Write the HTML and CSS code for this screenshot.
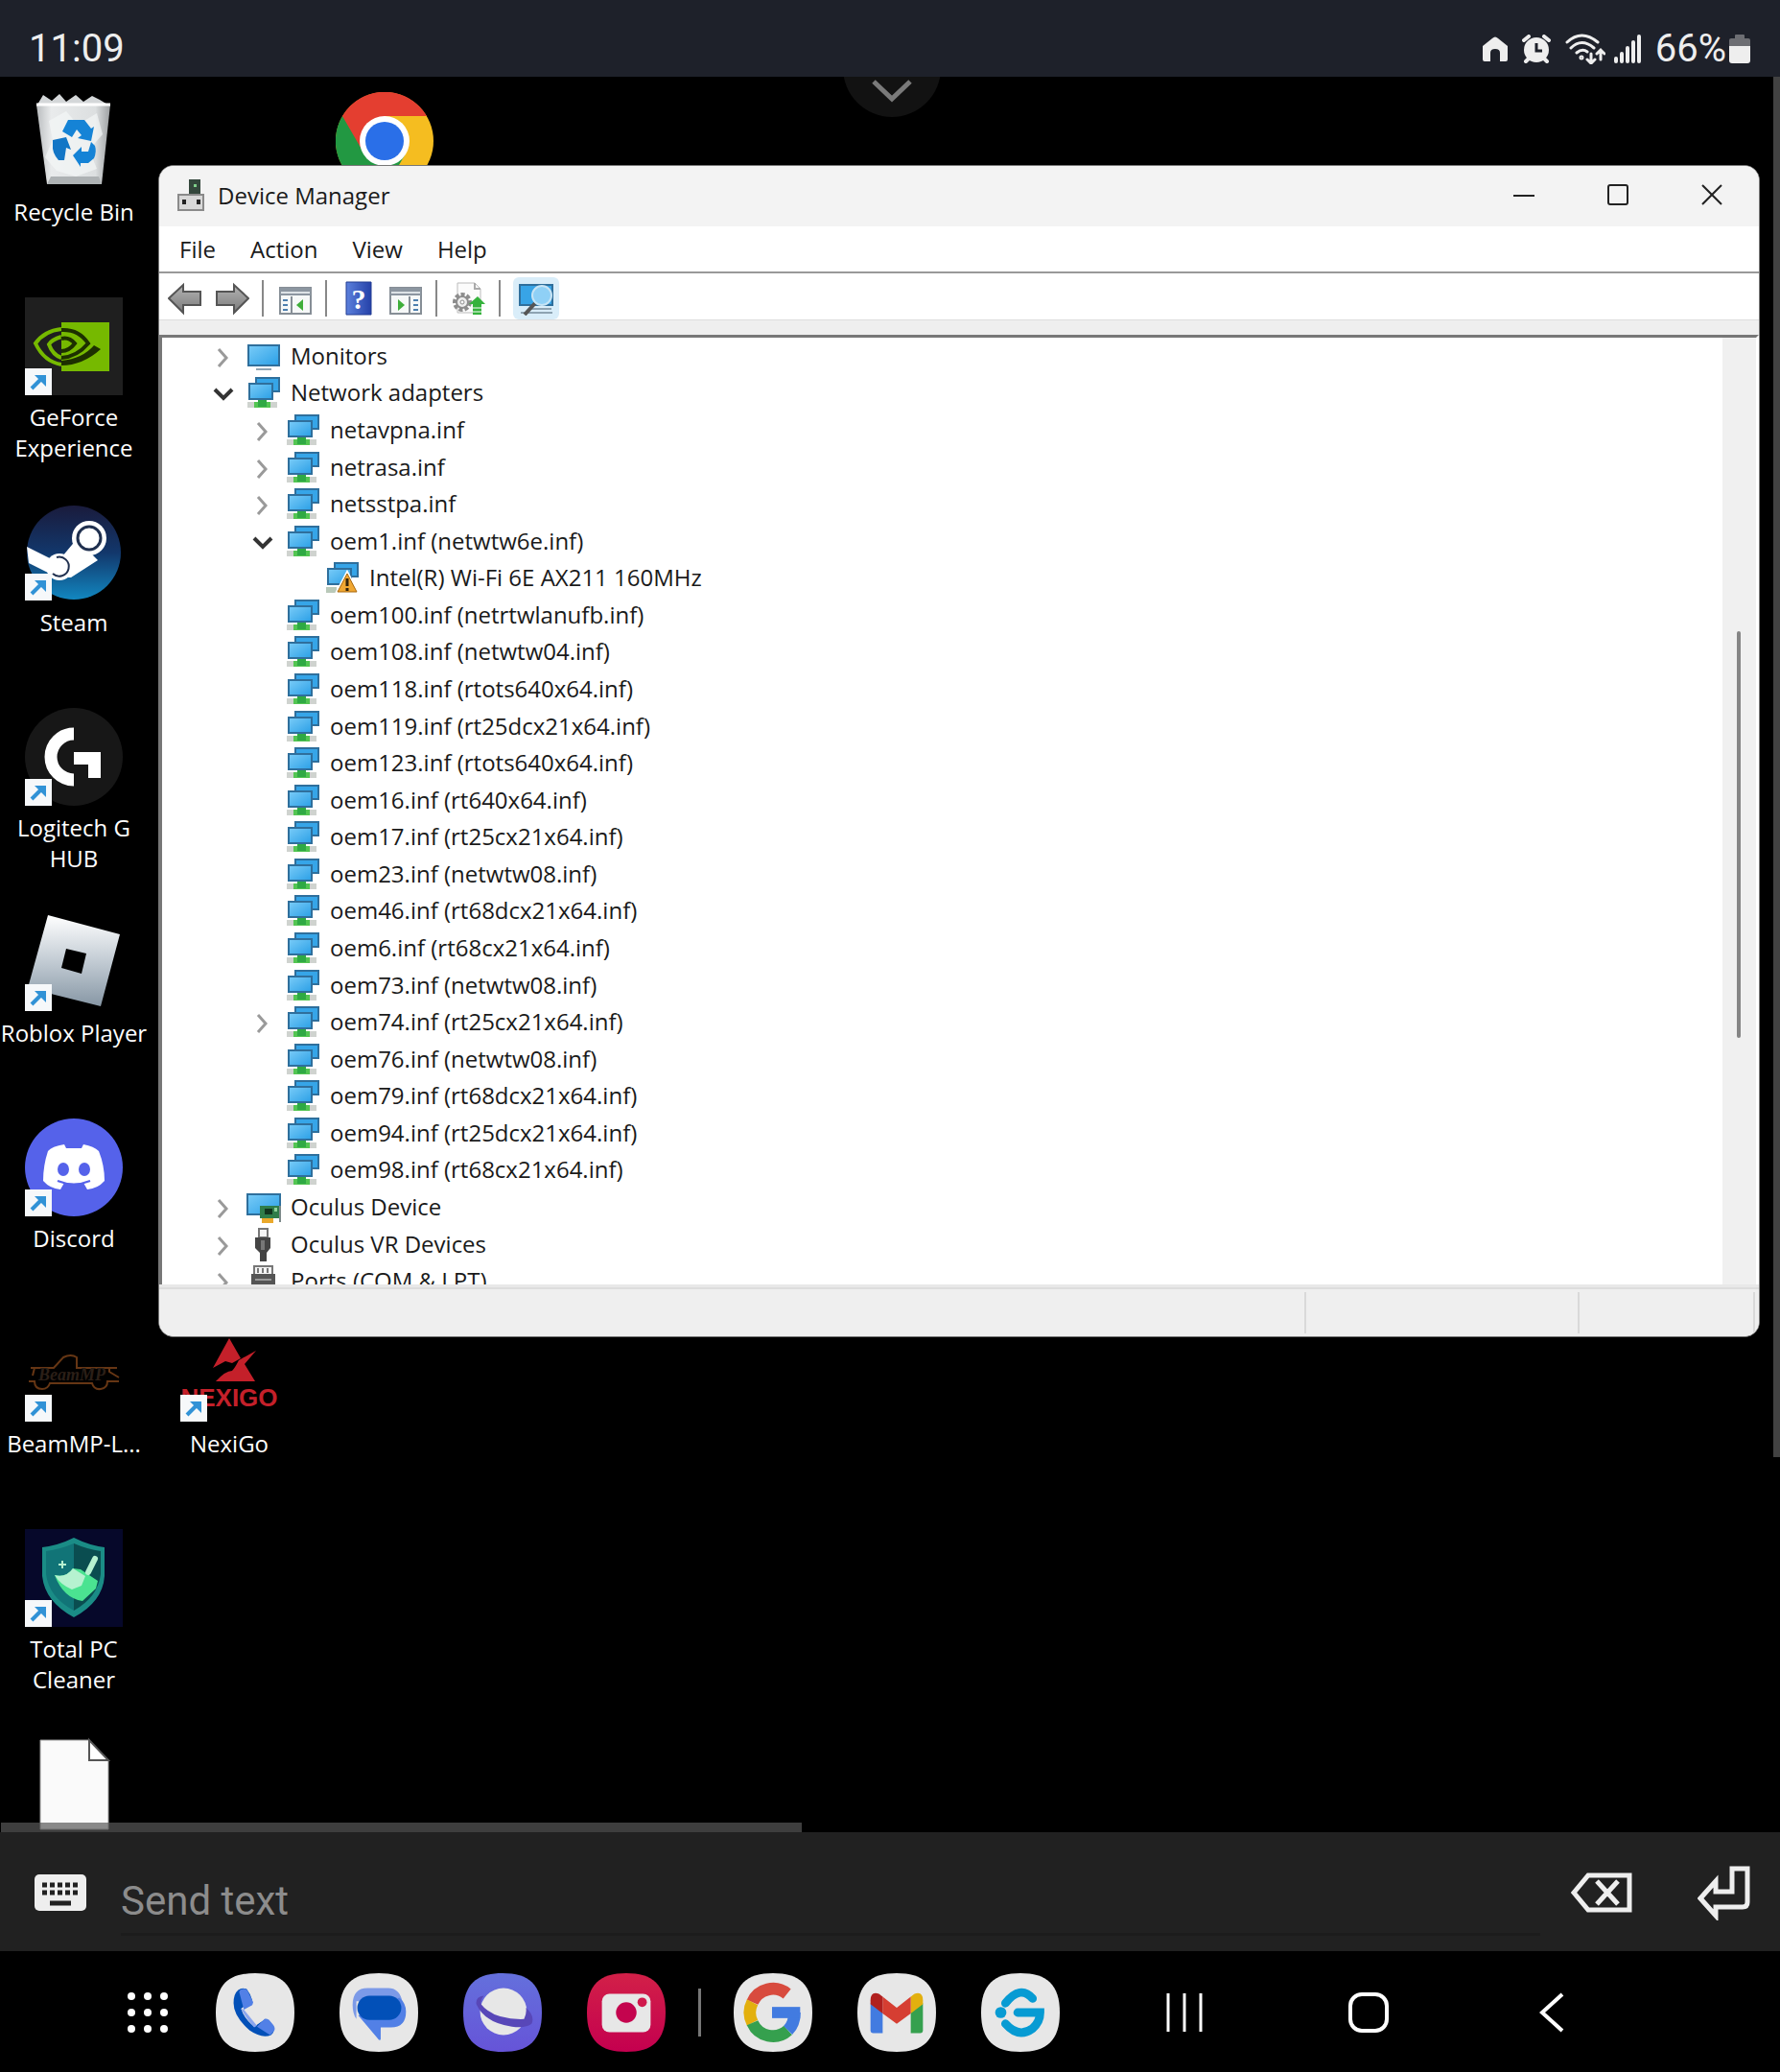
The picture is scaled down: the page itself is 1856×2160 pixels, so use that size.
FILE: index.html
```html
<!doctype html>
<html lang="en">
<head>
<title>Remote Desktop</title>
<meta charset="utf-8">
<meta name="viewport" content="width=device-width, initial-scale=1">
<link rel="stylesheet" href="styles.css">
</head>
<body>

<!-- shared icons -->
<svg class="defs" aria-hidden="true">
	<defs>
		<linearGradient id="screen" x1="0" y1="0" x2="1" y2="1">
			<stop offset="0" stop-color="#7accf8"/><stop offset="1" stop-color="#2a9fe6"/>
		</linearGradient>
		<linearGradient id="steamBg" x1="0" y1="0" x2="0" y2="1">
			<stop offset="0" stop-color="#1a1b3c"/><stop offset=".5" stop-color="#12376b"/><stop offset="1" stop-color="#1287c0"/>
		</linearGradient>
		<linearGradient id="silver" x1="0" y1="0" x2="0" y2="1">
			<stop offset="0" stop-color="#fff"/><stop offset=".5" stop-color="#c3ccd4"/><stop offset="1" stop-color="#8797a5"/>
		</linearGradient>
		<linearGradient id="helpBg" x1="0" y1="0" x2="1" y2="0">
			<stop offset="0" stop-color="#5b80dc"/><stop offset="1" stop-color="#2541a8"/>
		</linearGradient>
		<linearGradient id="arrowBg" x1="0" y1="0" x2="0" y2="1">
			<stop offset="0" stop-color="#b4b4b4"/><stop offset="1" stop-color="#7a7a7a"/>
		</linearGradient>
		<linearGradient id="planetBg" x1="0" y1="0" x2="0" y2="1">
			<stop offset="0" stop-color="#6470dc"/><stop offset="1" stop-color="#6654d8"/>
		</linearGradient>
		<linearGradient id="cameraBg" x1="0" y1="0" x2="0" y2="1">
			<stop offset="0" stop-color="#d22048"/><stop offset="1" stop-color="#c4004f"/>
		</linearGradient>
		<linearGradient id="binBg" x1="0" y1="0" x2="1" y2="0">
			<stop offset="0" stop-color="#b9bcbe"/><stop offset=".2" stop-color="#e9ebec"/><stop offset=".8" stop-color="#dcdfe0"/><stop offset="1" stop-color="#9c9fa1"/>
		</linearGradient>
	</defs>
	<symbol id="closed" viewBox="0 0 40 36"><path d="M15 10l8 9-8 9" fill="none" stroke="#9a9a9a" stroke-width="3"/></symbol>
	<symbol id="open" viewBox="0 0 40 36"><path d="M11 14l9 9 9-9" fill="none" stroke="#333" stroke-width="4"/></symbol>
	<symbol id="monitor" viewBox="0 0 36 36">
		<path d="M2 6h32v21H2z" fill="url(#screen)" stroke="#2f6f9c" stroke-width="2"/>
		<path d="M10 31h16" stroke="#8fa4b3" stroke-width="2"/>
	</symbol>
	<symbol id="screens" viewBox="0 0 36 36">
		<path d="M10 2h24v14H10z" fill="#36a5e8" stroke="#2f6f9c" stroke-width="2"/>
		<path d="M3 8h24v16H3z" fill="url(#screen)" stroke="#2f6f9c" stroke-width="2"/>
	</symbol>
	<symbol id="net" viewBox="0 0 36 36">
		<path d="M1 30h31" stroke="#cfd3cf" stroke-width="6"/>
		<path d="M8 30h17" stroke="#53c552" stroke-width="6"/>
		<path d="M12 24h9v8h-9z" fill="#2fa944"/>
		<use href="#screens"/>
	</symbol>
	<symbol id="netWarn" viewBox="0 0 36 36">
		<path d="M1 30h11" stroke="#b9c9b9" stroke-width="6"/>
		<use href="#screens"/>
		<path d="M23 12l11 21H12z" fill="#f0a732" stroke="#fff" stroke-width="3"/>
		<path d="M23 13l10 19H13z" fill="#f0a732" stroke="#a8670c" stroke-width="1"/>
		<path d="M23 18v8M23 28v3" stroke="#33230a" stroke-width="3"/>
	</symbol>
	<symbol id="card" viewBox="0 0 36 36">
		<path d="M1 4h34v21H1z" fill="url(#screen)" stroke="#2f6f9c" stroke-width="2"/>
		<path d="M14 16h20v13H14z" fill="#2f7d4a"/>
		<path d="M19 19h8v6h-8z" fill="#12351f"/>
		<path d="M29 18h3v4h-3z" fill="#8fd29a"/>
		<path d="M35 16v17" stroke="#7d8a8a" stroke-width="2"/>
		<path d="M16 29h12v5H16z" fill="#eaa92b"/>
	</symbol>
	<symbol id="usb" viewBox="0 0 36 36">
		<path d="M13 1h9v9h-9z" fill="#f4f4f4" stroke="#777" stroke-width="2"/>
		<path d="M9 10h16v11l-4 5v9h-7v-9l-5-5z" fill="#444"/>
		<path d="M15 13h4v10h-4z" fill="#777"/>
	</symbol>
	<symbol id="port" viewBox="0 0 36 36">
		<path d="M8 2h19v9H8z" fill="#f4f4f4" stroke="#777" stroke-width="2"/>
		<path d="M12 4v5M17 4v5M22 4v5" stroke="#777" stroke-width="2"/>
		<path d="M5 10h25v26H5z" fill="#555"/>
		<path d="M9 16h17M9 22h17" stroke="#999" stroke-width="2"/>
	</symbol>
	<symbol id="shortcut" viewBox="0 0 28 28">
		<path d="M0 0h28v28H0z" fill="#f6f8fa"/>
		<path d="M7 21L17 11" stroke="#3192d6" stroke-width="4"/>
		<path d="M10 7h12v12l-4-4-5-5z" fill="#3192d6"/>
	</symbol>
	<symbol id="tile" viewBox="0 0 84 84"><path d="M42 0C70 0 84 12 84 42S70 84 42 84 0 72 0 42 14 0 42 0z"/></symbol>
</svg>

<header class="status">
	<time>11:09</time>
	<div class="status-icons">
		<svg width="26" height="30" viewBox="0 0 26 30"><path d="M0 12L10 4q3-3 6 0l10 8v14q0 2-2 2h-6V19q0-4-5-4t-5 4v9H2q-2 0-2-2z" fill="#eee"/></svg>
		<svg width="30" height="30" viewBox="0 0 30 30"><circle cx="15" cy="16" r="13" fill="#eee"/><path d="M2 6l5-4M28 6l-5-4M4 28l4-4M26 28l-4-4" stroke="#eee" stroke-width="4" stroke-linecap="round"/><path d="M15 9v8h6" fill="none" stroke="#1e212a" stroke-width="3"/></svg>
		<svg class="wifi" width="42" height="32" viewBox="0 0 42 32" fill="none" stroke="#eee" stroke-width="3" stroke-linecap="round"><path d="M2 9Q17-5 34 9M6 15q11-11 24 0M12 20q6-5 11-1"/><circle cx="17" cy="25" r="1"/><path d="M27 21v9M23 27l4 4 4-4M37 27v-9M33 21l4-4 4 4"/></svg>
		<svg width="28" height="30" viewBox="0 0 28 30" stroke="#eee" stroke-width="4" stroke-linecap="round"><path d="M2 25v3M8 20v8M14 14v14M20 8v20M26 2v26"/></svg>
		<span class="battery-level">66%</span>
		<svg width="22" height="32" viewBox="0 0 22 32"><path d="M0 13V7q0-2 2-2h4V2q0-1 1-1h8q1 0 1 1v3h4q2 0 2 2v6z" fill="#6d6e73"/><path d="M0 13h22v15q0 3-3 3H3q-3 0-3-3z" fill="#eee"/></svg>
	</div>
</header>

<main class="desktop">

	<div class="icons">
		<a class="icon" href="#">
			<span class="art"><svg width="102" height="102" viewBox="0 0 102 102">
				<path d="M13 13l6-10 9 6 8-7 7 8 10-7 8 7 9-6 8 4 10 6z" fill="#d4d7d9"/>
				<path d="M12 13h77L80 96H23z" fill="url(#binBg)"/>
				<path d="M12 13h77" stroke="#fff" stroke-width="3"/>
				<path d="M25 30l18-10 12 14 20-12 6 22-14 16 8 20-22 8-20-6-12-14 8-18z" fill="#f4f6f7" opacity=".7"/>
				<path d="M23 96l4-8h50l3 8z" fill="#aeb2b4"/>
				<path d="M39 41l6-12h17l7 9 3-2-3 15-14-3 4-3-5-6-5 8z" fill="#1583d6"/>
				<path d="M29 50l14-3 5 13-5-2-2 13H35q-7-8-6-16z" fill="#1376c6"/>
				<path d="M50 66l9-9v5h7l3-10 4 4q2 6-1 13l-6 5h-8v4z" fill="#1583d6"/>
			</svg></span>
			<span class="name">Recycle Bin</span>
		</a>
		<a class="icon" href="#">
			<span class="art"><svg width="102" height="102" viewBox="0 0 102 102">
				<path d="M0 0h102v102H0z" fill="#1f1f1f"/>
				<path d="M38 26h50v51H38z" fill="#76b900"/>
				<path d="M38 33Q20 35 11 48q9 19 27 22" fill="none" stroke="#76b900" stroke-width="4"/>
				<path d="M38 41q-10 3-13 8 4 11 13 14" fill="none" stroke="#76b900" stroke-width="4"/>
				<path d="M38 34q18-1 28 14-12 14-28 15M38 43q8-2 14 5-6 8-14 8" fill="none" stroke="#1d3000" stroke-width="4"/>
				<path d="M38 71q22 0 41-17l-7-4q-12 14-34 16z" fill="#1d3000"/>
			</svg><svg class="badge"><use href="#shortcut"/></svg></span>
			<span class="name">GeForce Experience</span>
		</a>
		<a class="icon" href="#">
			<span class="art"><svg width="102" height="102" viewBox="0 0 102 102">
				<circle cx="51" cy="52" r="49" fill="url(#steamBg)"/>
				<path d="M2 46l32 16 20-24 22 22-28 18-14 0L4 63z" fill="#fff"/>
				<circle cx="67" cy="37" r="18" fill="#fff"/><circle cx="67" cy="37" r="12" fill="#fff" stroke="#20304f" stroke-width="3"/>
				<circle cx="36" cy="67" r="14" fill="#fff"/><path d="M33 57a10 10 0 1 1-4 17" fill="none" stroke="#20304f" stroke-width="2"/>
			</svg><svg class="badge"><use href="#shortcut"/></svg></span>
			<span class="name">Steam</span>
		</a>
		<a class="icon" href="#">
			<span class="art"><svg width="102" height="102" viewBox="0 0 102 102">
				<circle cx="51" cy="51" r="51" fill="#171717"/>
				<path d="M51 27a24 24 0 0 0 0 48" fill="none" stroke="#fff" stroke-width="13"/>
				<path d="M51 46h28v27H66V59H51z" fill="#fff"/>
			</svg><svg class="badge"><use href="#shortcut"/></svg></span>
			<span class="name">Logitech G HUB</span>
		</a>
		<a class="icon" href="#">
			<span class="art"><svg width="102" height="102" viewBox="0 0 102 102">
				<path fill-rule="evenodd" d="M24 2l75 20-20 75L3 78zM43 37l-5 20 21 6 5-21z" fill="url(#silver)"/>
			</svg><svg class="badge"><use href="#shortcut"/></svg></span>
			<span class="name">Roblox Player</span>
		</a>
		<a class="icon" href="#">
			<span class="art"><svg width="102" height="102" viewBox="0 0 102 102">
				<circle cx="51" cy="51" r="51" fill="#5562ea"/>
				<path fill-rule="evenodd" d="M41 27q-13 2-17 7-5 15-5 31 7 8 18 9l4-7q10 2 20 0l4 7q11-1 18-9 0-16-6-31-5-5-16-7l-2 4H43zM40 46a6 7 0 1 1 0 14 6 7 0 0 1 0-14zM62 46a6 7 0 1 1 0 14 6 7 0 0 1 0-14z" fill="#fff"/>
				<path d="M34 65q17 7 34 0" fill="none" stroke="#5562ea" stroke-width="2"/>
			</svg><svg class="badge"><use href="#shortcut"/></svg></span>
			<span class="name">Discord</span>
		</a>
		<a class="icon" href="#">
			<span class="art"><svg width="102" height="102" viewBox="0 0 102 102">
				<g fill="none" stroke="#663614" stroke-width="2"><path d="M6 46h24l10-11q8-4 14 0v11h42M4 60h6q0 8 8 8 6 0 8-6h44q2 7 9 6 7-1 7-8h12"/><path d="M10 46l-2 8M88 46v4l10 6"/></g>
				<text x="14" y="59" class="beam">BeamMP</text>
			</svg><svg class="badge"><use href="#shortcut"/></svg></span>
			<span class="name">BeamMP-L...</span>
		</a>
		<a class="icon" href="#">
			<span class="art"><svg width="102" height="102" viewBox="0 0 102 102">
				<path d="M0 0h102v102H0z" fill="#06082a"/>
				<path d="M51 9q16 8 32 10v30q-2 27-32 43Q21 76 18 49V19q17-2 33-10z" fill="#1a8c86"/>
				<path d="M51 15v70Q25 71 22 47V23q15-2 29-8z" fill="#117477"/>
				<path d="M51 15q14 6 28 8v24q-3 24-28 38z" fill="#0a4d50"/>
				<path d="M31 48q12 3 19-7l8 1 18 12-2 8-14 13q-20-3-29-27z" fill="#4be391"/>
				<path d="M31 48q12 3 19-7l13 8-4 10-10 4q-12-5-18-15z" fill="#b6f2d0"/>
				<path d="M66 45l7-14" stroke="#b6f2d0" stroke-width="6" stroke-linecap="round"/>
				<path d="M39 33v8M35 37h8" stroke="#b6f2d0" stroke-width="2"/>
			</svg><svg class="badge"><use href="#shortcut"/></svg></span>
			<span class="name">Total PC Cleaner</span>
		</a>
		<a class="icon" href="#" aria-label="File">
			<span class="art"><svg width="102" height="102" viewBox="0 0 102 102">
				<path d="M16 6h51l20 21v72H16z" fill="#fafafa" stroke="#999" stroke-width="1"/>
				<path d="M67 6v21h20z" fill="#fff" stroke="#555" stroke-width="2"/>
			</svg></span>
		</a>
		<a class="icon nexigo" href="#">
			<span class="art"><svg width="102" height="102" viewBox="0 0 102 102">
				<path d="M51 15l12 21-9 5-7-2-13 7zM37 60q10-11 17-11 3-3 7-11L79 28 67 42l11 18z" fill="#c4202a"/>
				<text x="51" y="86" class="nexi">NEXIGO</text>
			</svg><svg class="badge"><use href="#shortcut"/></svg></span>
			<span class="name">NexiGo</span>
		</a>
		<a class="icon chrome" href="#" aria-label="Chrome">
			<span class="art"><svg width="102" height="102" viewBox="0 0 102 102">
				<circle cx="51" cy="51" r="51" fill="#f5bd20"/>
				<path d="M51 51L7 25a51 51 0 0 0 44 77l22-38z" fill="#229842"/>
				<path d="M51 25h44A51 51 0 0 0 7 25l22 38z" fill="#e43e30"/>
				<circle cx="51" cy="51" r="26" fill="#fff"/><circle cx="51" cy="51" r="20" fill="#2a6fe8"/>
			</svg></span>
		</a>
	</div>

	<section class="window">
		<div class="titlebar">
			<svg width="28" height="34" viewBox="0 0 28 34"><path d="M12 1h12v16H12z" fill="#34473c"/><path d="M17 6h3v3h-3z" fill="#7fd08a"/><path d="M1 17h26v16H1z" fill="#d8d8d8" stroke="#8a8a8a" stroke-width="2"/><path d="M5 22h4v5H5zM20 22h4v5h-4z" fill="#222"/></svg>
			<h1>Device Manager</h1>
			<button aria-label="Minimize"><svg width="24" height="24"><path d="M1 13h22" stroke="#222" stroke-width="2"/></svg></button>
			<button aria-label="Maximize"><svg width="24" height="24"><rect x="2" y="2" width="20" height="20" rx="2" fill="none" stroke="#222" stroke-width="2"/></svg></button>
			<button aria-label="Close"><svg width="24" height="24"><path d="M2 2l20 20M22 2L2 22" stroke="#222" stroke-width="2"/></svg></button>
		</div>

		<nav class="menubar">
			<button>File</button>
			<button>Action</button>
			<button>View</button>
			<button>Help</button>
		</nav>

		<div class="toolbar">
			<button aria-label="Back"><svg width="36" height="36" viewBox="0 0 36 36"><path d="M1 18L16 4v7h18v14H16v8z" fill="url(#arrowBg)" stroke="#555" stroke-width="2"/></svg></button>
			<button aria-label="Forward"><svg width="36" height="36" viewBox="0 0 36 36"><path d="M35 18L20 4v7H2v14h18v8z" fill="url(#arrowBg)" stroke="#555" stroke-width="2"/></svg></button>
			<i></i>
			<button aria-label="Show or hide console tree"><svg width="36" height="36" viewBox="0 0 36 36"><path d="M2 7h32v27H2z" fill="#f6f8f8" stroke="#868e96" stroke-width="2"/><path d="M2 7h32v8H2z" fill="#8c96a0"/><path d="M3 12h30" stroke="#dde2e6" stroke-width="2"/><path d="M14 16v18" stroke="#868e96" stroke-width="2"/><path d="M5 20h5M5 25h5M5 30h5" stroke="#4d7fae" stroke-width="2"/><path d="M26 19v12l-7-6z" fill="#3fae3a"/></svg></button>
			<i></i>
			<button aria-label="Help"><svg width="36" height="36" viewBox="0 0 36 36"><path d="M5 1h26v34H5z" fill="url(#helpBg)" stroke="#223c92" stroke-width="1"/><text x="18" y="29" class="help">?</text></svg></button>
			<button aria-label="Show or hide action pane"><svg width="36" height="36" viewBox="0 0 36 36"><path d="M2 7h32v27H2z" fill="#f6f8f8" stroke="#868e96" stroke-width="2"/><path d="M2 7h32v8H2z" fill="#8c96a0"/><path d="M3 12h30" stroke="#dde2e6" stroke-width="2"/><path d="M22 16v18" stroke="#868e96" stroke-width="2"/><path d="M26 20h5M26 25h5M26 30h5" stroke="#4d7fae" stroke-width="2"/><path d="M10 19v12l7-6z" fill="#3fae3a"/></svg></button>
			<i></i>
			<button aria-label="Update driver"><svg width="36" height="36" viewBox="0 0 36 36"><path d="M6 2h18l6 6v25H6z" fill="#fbfbfb" stroke="#bbb" stroke-width="1"/><path d="M24 2v6h6" fill="none" stroke="#aaa" stroke-width="2"/><circle cx="11" cy="22" r="8" fill="none" stroke="#8d8d8d" stroke-width="4" stroke-dasharray="4 2"/><circle cx="11" cy="22" r="6" fill="#eee" stroke="#8d8d8d" stroke-width="2"/><circle cx="11" cy="22" r="2" fill="#fff" stroke="#8d8d8d"/><path d="M27 16l8 8h-4v11h-9V24h-4z" fill="#35b23c"/><path d="M22 28h9M22 32h9" stroke="#fff" stroke-width="1"/></svg></button>
			<i></i>
			<button class="active" aria-label="Scan for hardware changes"><svg width="36" height="36" viewBox="0 0 36 36"><path d="M1 4h34v21H1z" fill="#38a4e6" stroke="#2f6f9c" stroke-width="2"/><path d="M2 33h33M12 29h22" stroke="#8ea3b2" stroke-width="2"/><path d="M17 23L6 35" stroke="#555" stroke-width="4"/><circle cx="24" cy="15" r="10" fill="#8fd0f6" stroke="#c7e4f5" stroke-width="2"/></svg></button>
		</div>

		<div class="pane">
			<ul class="tree">
				<li><button aria-label="Expand"><svg><use href="#closed"/></svg></button><svg><use href="#monitor"/></svg>Monitors</li>
				<li><button aria-label="Collapse"><svg><use href="#open"/></svg></button><svg><use href="#net"/></svg>Network adapters</li>
				<li class="sub"><button aria-label="Expand"><svg><use href="#closed"/></svg></button><svg><use href="#net"/></svg>netavpna.inf</li>
				<li class="sub"><button aria-label="Expand"><svg><use href="#closed"/></svg></button><svg><use href="#net"/></svg>netrasa.inf</li>
				<li class="sub"><button aria-label="Expand"><svg><use href="#closed"/></svg></button><svg><use href="#net"/></svg>netsstpa.inf</li>
				<li class="sub"><button aria-label="Collapse"><svg><use href="#open"/></svg></button><svg><use href="#net"/></svg>oem1.inf (netwtw6e.inf)</li>
				<li class="device"><svg><use href="#netWarn"/></svg>Intel(R) Wi-Fi 6E AX211 160MHz</li>
				<li class="leaf"><svg><use href="#net"/></svg>oem100.inf (netrtwlanufb.inf)</li>
				<li class="leaf"><svg><use href="#net"/></svg>oem108.inf (netwtw04.inf)</li>
				<li class="leaf"><svg><use href="#net"/></svg>oem118.inf (rtots640x64.inf)</li>
				<li class="leaf"><svg><use href="#net"/></svg>oem119.inf (rt25dcx21x64.inf)</li>
				<li class="leaf"><svg><use href="#net"/></svg>oem123.inf (rtots640x64.inf)</li>
				<li class="leaf"><svg><use href="#net"/></svg>oem16.inf (rt640x64.inf)</li>
				<li class="leaf"><svg><use href="#net"/></svg>oem17.inf (rt25cx21x64.inf)</li>
				<li class="leaf"><svg><use href="#net"/></svg>oem23.inf (netwtw08.inf)</li>
				<li class="leaf"><svg><use href="#net"/></svg>oem46.inf (rt68dcx21x64.inf)</li>
				<li class="leaf"><svg><use href="#net"/></svg>oem6.inf (rt68cx21x64.inf)</li>
				<li class="leaf"><svg><use href="#net"/></svg>oem73.inf (netwtw08.inf)</li>
				<li class="sub"><button aria-label="Expand"><svg><use href="#closed"/></svg></button><svg><use href="#net"/></svg>oem74.inf (rt25cx21x64.inf)</li>
				<li class="leaf"><svg><use href="#net"/></svg>oem76.inf (netwtw08.inf)</li>
				<li class="leaf"><svg><use href="#net"/></svg>oem79.inf (rt68dcx21x64.inf)</li>
				<li class="leaf"><svg><use href="#net"/></svg>oem94.inf (rt25dcx21x64.inf)</li>
				<li class="leaf"><svg><use href="#net"/></svg>oem98.inf (rt68cx21x64.inf)</li>
				<li><button aria-label="Expand"><svg><use href="#closed"/></svg></button><svg><use href="#card"/></svg>Oculus Device</li>
				<li><button aria-label="Expand"><svg><use href="#closed"/></svg></button><svg><use href="#usb"/></svg>Oculus VR Devices</li>
				<li><button aria-label="Expand"><svg><use href="#closed"/></svg></button><svg><use href="#port"/></svg>Ports (COM &amp; LPT)</li>
			</ul>
			<div class="scrollbar"><div class="thumb"></div></div>
		</div>

		<div class="statusbar"><span></span><span></span><span></span></div>
	</section>

	<button class="pulldown" aria-label="Show controls"><svg width="104" height="42" viewBox="0 0 104 42"><circle cx="52" cy="-9" r="51" fill="#121212"/><path d="M33 5l19 18L71 5" fill="none" stroke="#7a7a7a" stroke-width="5"/></svg></button>
	<div class="vbar"></div>
	<div class="hbar"></div>
</main>

<form class="sendbar">
	<button type="button" aria-label="Keyboard"><svg width="54" height="38" viewBox="0 0 54 38"><rect width="54" height="38" rx="5" fill="#eee"/><path d="M8 11h39M8 19h39" stroke="#212121" stroke-width="5" stroke-dasharray="5 3"/><path d="M16 30h22" stroke="#212121" stroke-width="5"/></svg></button>
	<input type="text" placeholder="Send text" aria-label="Send text">
	<button type="button" aria-label="Backspace"><svg width="64" height="42" viewBox="0 0 64 42" fill="none" stroke="#eee"><path d="M3 21L18 3h43v36H18z" stroke-width="5"/><path d="M27 9l22 24M49 9L27 33" stroke-width="5"/></svg></button>
	<button type="button" aria-label="Enter"><svg width="56" height="58" viewBox="0 0 56 58"><path d="M36 4h16v35q0 5-5 5H19v9L3 35l16-18v11h17z" fill="none" stroke="#eee" stroke-width="5"/></svg></button>
</form>

<footer class="taskbar">
	<button class="apps" aria-label="All apps"><svg width="44" height="44" viewBox="0 0 44 44" fill="#fff"><circle cx="5" cy="5" r="4"/><circle cx="22" cy="5" r="4"/><circle cx="39" cy="5" r="4"/><circle cx="5" cy="22" r="4"/><circle cx="22" cy="22" r="4"/><circle cx="39" cy="22" r="4"/><circle cx="5" cy="39" r="4"/><circle cx="22" cy="39" r="4"/><circle cx="39" cy="39" r="4"/></svg></button>
	<button aria-label="Phone"><svg class="app" viewBox="0 0 84 84"><use href="#tile" fill="#e7e7e7"/><path d="M24 18q4-3 9-1 4 5 6 12l-12 9q3 10 14 19l12-8q7 3 9 9 1 5-3 8-10 4-23-5Q19 46 19 32q0-10 5-14z" fill="#0250b8"/><path d="M29 17q3-1 5 2l6 12-1 3-9 5-5-19q1-3 4-3zM44 57l8-8q2-1 5 1l5 6q2 4 0 6l-4 4z" fill="#5280e6"/><path d="M27 38q5 10 14 20l3-2-14-17z" fill="#8aa6ee"/></svg></button>
	<button aria-label="Messages"><svg class="app" viewBox="0 0 84 84"><use href="#tile" fill="#e7e7e7"/><path d="M30 16h22q12 0 15 14H18v19q-4-6-4-15 0-18 16-18z" fill="#7c9ae8"/><path d="M64 26q7 6 7 15 0 17-16 17H44v13q-2 1-3-1L20 45z" fill="#5280e6"/><rect x="19" y="24" width="47" height="26" rx="13" fill="#0250b8"/></svg></button>
	<button aria-label="Internet"><svg class="app" viewBox="0 0 84 84"><use href="#tile" fill="url(#planetBg)"/><circle cx="43" cy="41" r="25" fill="#e7e7e7"/><path d="M22 24q-9 1-8 9 9 20 38 24 15 2 21-3 4-8-6-17 1 6-2 12Q32 50 19 33q-1-4 3-9z" fill="#5847b8"/></svg></button>
	<button aria-label="Camera"><svg class="app" viewBox="0 0 84 84"><use href="#tile" fill="url(#cameraBg)"/><rect x="16" y="22" width="52" height="41" rx="8" fill="#e7e7e7"/><circle cx="42" cy="42" r="11" fill="#c4044e"/><circle cx="59" cy="31" r="5" fill="#d0184c"/></svg></button>
	<hr>
	<button aria-label="Google"><svg class="app" viewBox="0 0 84 84"><use href="#tile" fill="#e7e7e7"/><g fill="none" stroke-width="13"><path d="M57 22A24 24 0 0 0 20 31" stroke="#d84b3e"/><path d="M20 31a24 24 0 0 0 0 22" stroke="#e3b00e"/><path d="M20 53a24 24 0 0 0 38 8" stroke="#35a04e"/><path d="M58 61q7-7 7-19" stroke="#427be0"/></g><path d="M41 36h30v12H41z" fill="#427be0"/></svg></button>
	<button aria-label="Gmail"><svg class="app" viewBox="0 0 84 84"><use href="#tile" fill="#e7e7e7"/><path d="M14 32l13 10v22H17q-3 0-3-3z" fill="#427be0"/><path d="M57 42l13-10v29q0 3-3 3H57z" fill="#35a04e"/><path d="M57 25l4-3q9-3 9 7v4L57 43z" fill="#e3b00e"/><path d="M27 25l15 12 15-12v18L42 54 27 43z" fill="#d63e32"/><path d="M14 29q0-10 9-7l4 3v18L14 33z" fill="#b1201f"/></svg></button>
	<button aria-label="Remote control"><svg class="app" viewBox="0 0 84 84"><use href="#tile" fill="#e7e7e7"/><g fill="none" stroke="#079bd3" stroke-width="9" stroke-linecap="round"><path d="M26 32q16-20 29-5M26 54q14 16 29 5 8-7 8-17H39"/></g><circle cx="21" cy="42" r="6" fill="#079bd3"/></svg></button>

	<nav>
		<button aria-label="Recents"><svg width="42" height="42"><path d="M4 1v40M21 1v40M38 1v40" stroke="#fff" stroke-width="3"/></svg></button>
		<button aria-label="Home"><svg width="42" height="42"><rect x="2" y="2" width="38" height="38" rx="12" fill="none" stroke="#fff" stroke-width="4"/></svg></button>
		<button aria-label="Back"><svg width="42" height="42"><path d="M31 2L10 21l21 19" fill="none" stroke="#fff" stroke-width="4"/></svg></button>
	</nav>
</footer>

</body>
</html>
```
FILE: styles.css
```css
* { margin: 0; padding: 0; box-sizing: border-box; }

body {
	height: 100vh;
	display: flex; flex-direction: column;
	overflow: hidden;
	background: #000;
	font-family: "Open Sans", "Noto Sans", sans-serif;
	font-size: 24px;
}
button { border: none; background: none; font: inherit; color: inherit; }
svg { display: block; flex: none; }
.defs { position: absolute; width: 0; height: 0; }

/* phone status bar */
.status {
	height: 80px; flex: none;
	padding: 22px 31px 0 30px;
	display: flex; justify-content: space-between; align-items: center;
	background: #1e212a;
	color: #eee;
	font-family: Roboto, sans-serif;
	font-size: 40px;
	line-height: 48px;
}
.status-icons { display: flex; align-items: center; gap: 15px; }
.status-icons .wifi { margin-right: -6px; }
.status-icons .battery-level { margin-right: -12px; }

/* remote desktop */
.desktop {
	flex: 1; min-height: 0;
	position: relative;
	overflow: hidden;
}
.icons {
	display: grid;
	grid-template-rows: repeat(9, 214px);
	grid-auto-columns: 162px;
	grid-auto-flow: column;
	margin-left: -4px;
	padding-top: 16px;
}
.icon {
	display: flex; flex-direction: column; align-items: center;
	color: #fff;
	text-decoration: none;
	text-align: center;
	line-height: 32px;
}
.icon .art { position: relative; margin-bottom: 7px; }
.icon .name { max-width: 162px; }
.badge {
	position: absolute; left: 0; bottom: 0;
	width: 28px; height: 28px;
}
.nexigo { grid-area: 7 / 2; }
.chrome { grid-area: 1 / 3; }
.beam { font: italic bold 18px "Liberation Serif", serif; fill: #2b1f17; }
.nexi { font: bold 26px "Liberation Sans", sans-serif; fill: #c4202a; text-anchor: middle; }

/* device manager */
.window {
	position: absolute; top: 92px; left: 165px; right: 21px;
	border: 1px solid #777;
	border-radius: 16px;
	overflow: hidden;
	background: #fff;
	color: #1a1a1a;
}
.titlebar {
	height: 63px;
	display: flex; align-items: center;
	padding: 0 0 3px 19px;
	background: #f3f3f3;
}
.titlebar h1 {
	flex: 1;
	padding-left: 14px;
	font-size: 24px;
	font-weight: normal;
}
.titlebar button {
	width: 98px; height: 60px;
	display: flex; justify-content: center; align-items: center;
}
.menubar {
	height: 49px;
	display: flex; align-items: center; gap: 36px;
	padding-left: 21px;
	border-bottom: 2px solid #999;
}
.toolbar {
	height: 49px;
	display: flex; align-items: center; gap: 13px;
	padding: 3px 0 0 9px;
	border-bottom: 1px solid #ddd;
}
.toolbar i { width: 2px; height: 38px; margin-right: 2px; background: #888; }
.toolbar .active {
	padding: 4px 6px;
	margin-left: -2px;
	border-radius: 6px;
	background: #d9edf9;
}
.pane {
	height: 1008px;
	display: flex;
	border-top: 15px solid #efefef;
	border-bottom: 3px solid #e8e8e8;
}
.tree {
	flex: 1;
	height: 1006px;
	display: grid; grid-template-rows: repeat(26, minmax(0, 1fr));
	border-top: 3px solid #777;
	border-left: 3px solid #777;
	list-style: none;
	clip-path: inset(0 0 16px 0);
}
.tree li { display: flex; align-items: center; gap: 10px; padding: 0 0 2px 44px; }
.tree li > svg { width: 36px; height: 36px; margin-top: 3px; }
.tree button { margin: 3px -6px 0 0; }
.tree button svg { width: 40px; height: 36px; }
.tree .sub { padding-left: 85px; }
.tree .leaf { padding-left: 129px; }
.tree .device { padding-left: 170px; }
.scrollbar {
	width: 38px;
	padding: 306px 0 0 15px;
	background: #f0f0f0;
	border-top: 3px solid #777;
	border-right: 3px solid #fff;
}
.thumb { width: 4px; height: 424px; border-radius: 2px; background: #858585; }
.statusbar {
	height: 51px;
	display: flex;
	padding: 3px 4px 3px 0;
	border-top: 2px solid #ddd;
	background: #efefef;
}
.statusbar span { width: 183px; border-right: 2px solid #d9d9d9; }
.statusbar span:first-child { flex: 1; }
.statusbar span:nth-child(2) { width: 285px; }
.help { font: bold 30px "Liberation Serif", serif; fill: #fff; text-anchor: middle; }

/* viewer overlays */
.pulldown { position: absolute; top: 0; left: 50%; margin-left: -50px; }
.vbar {
	position: absolute; top: 0; right: 0;
	width: 7px; height: 1439px;
	background: #424242;
}
.hbar {
	position: absolute; left: 1px; bottom: 0;
	width: 45%; height: 10px;
	background: rgba(88, 88, 88, 0.7);
}

/* text entry */
.sendbar {
	height: 124px; flex: none;
	display: flex; align-items: center;
	padding: 2px 30px 0 36px;
	background: #212121;
}
.sendbar input {
	flex: 1; align-self: flex-end;
	height: 74px;
	margin: 0 32px 16px 36px;
	padding-top: 4px;
	border: none;
	border-bottom: 3px solid #1c1c1c;
	background: none;
	color: #eee;
	font-family: Roboto, sans-serif;
	font-size: 42px;
}
.sendbar input::placeholder { color: #8c8c8c; opacity: 1; }
.sendbar button:last-child { margin-left: 68px; }

/* android taskbar */
.taskbar {
	height: 126px; flex: none;
	display: flex; align-items: center; gap: 47px;
	padding: 2px 216px 0 132px;
}
.taskbar .apps { margin-right: 2px; }
.taskbar .app { width: 82px; height: 82px; }
.taskbar hr { width: 3px; height: 50px; margin: 0 -13px; border: none; background: #777; }
.taskbar nav { display: flex; gap: 150px; margin-left: auto; }
```
